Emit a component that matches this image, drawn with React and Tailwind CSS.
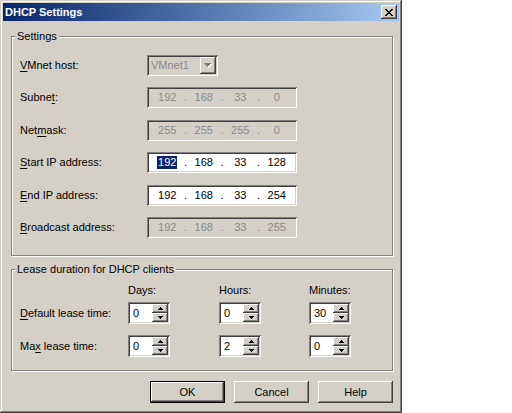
import React, { Fragment } from "react";

const sunken =
  "shadow-[inset_1px_1px_0_#808080,inset_-1px_-1px_0_#ffffff,inset_2px_2px_0_#404040,inset_-2px_-2px_0_#d4d0c8]";
const raised =
  "shadow-[inset_-1px_-1px_0_#404040,inset_1px_1px_0_#ffffff,inset_-2px_-2px_0_#808080,inset_2px_2px_0_#d4d0c8]";

function Lbl({ pre = "", u, post = "" }) {
  return (
    <span className="whitespace-pre">
      {pre}
      <span className="underline underline-offset-[2px]">{u}</span>
      {post}
    </span>
  );
}

function IP({ parts, enabled, selFirst }) {
  return (
    <div
      className={`flex items-center h-[21px] w-[150px] px-[4px] ${sunken} ${
        enabled ? "bg-white text-black" : "bg-[#d4d0c8] text-[#8a8a8a]"
      }`}
    >
      {parts.map((p, i) => (
        <Fragment key={i}>
          {i > 0 && <span className="w-[4px] text-center">.</span>}
          <span className="flex-1 text-center">
            <span
              className={
                i === 0 && selFirst
                  ? "inline-block bg-[#0a246a] text-white leading-[13px] px-[1px]"
                  : "inline-block leading-[13px] px-[1px]"
              }
            >
              {p}
            </span>
          </span>
        </Fragment>
      ))}
    </div>
  );
}

function Arrow({ up, color = "#000000" }) {
  return (
    <svg width="5" height="3" viewBox="0 0 5 3" shapeRendering="crispEdges">
      {up ? (
        <path d="M2 0h1v1h1v1h1v1H0V2h1V1h1z" fill={color} />
      ) : (
        <path d="M0 0h5v1H4v1H3v1H2V2H1V1H0z" fill={color} />
      )}
    </svg>
  );
}

function Spinner({ value }) {
  return (
    <div className={`flex w-[42px] h-[22px] bg-white p-[2px] ${sunken}`}>
      <div className="flex-1 flex items-center pl-[3px] text-black">{value}</div>
      <div className="flex flex-col w-[16px]">
        <div className={`h-[9px] flex items-center justify-center bg-[#d4d0c8] ${raised}`}>
          <Arrow up />
        </div>
        <div className={`h-[9px] flex items-center justify-center bg-[#d4d0c8] ${raised}`}>
          <Arrow />
        </div>
      </div>
    </div>
  );
}

function Row({ label, children, mt }) {
  return (
    <div className={`flex items-center h-[21px] ${mt}`}>
      <div className="w-[127px]">{label}</div>
      {children}
    </div>
  );
}

function Btn({ children, def }) {
  return (
    <div
      className={`w-[75px] h-[22px] flex items-center justify-center bg-[#d4d0c8] ${raised} ${
        def ? "border border-black" : ""
      }`}
    >
      {children}
    </div>
  );
}

export default function App() {
  return (
    <div className="w-[512px] h-[413px] bg-white font-['Liberation_Sans',Arial,sans-serif] text-[11px] text-black leading-[13px]">
      <div className="w-[402px] h-[413px] bg-[#d4d0c8] p-[3px] flex flex-col shadow-[inset_-1px_-1px_0_#404040,inset_1px_1px_0_#d4d0c8,inset_-2px_-2px_0_#808080,inset_2px_2px_0_#ffffff]">
        {/* Title bar */}
        <div className="h-[18px] flex items-center justify-between pl-[2px] pr-[2px] bg-linear-to-r from-[#0a246a] to-[#a6caf0]">
          <span className="font-bold text-white text-[11px]">DHCP Settings</span>
          <div className={`w-[16px] h-[14px] bg-[#d4d0c8] flex items-center justify-center ${raised}`}>
            <svg width="8" height="7" viewBox="0 0 8 7" shapeRendering="crispEdges">
              <path
                d="M0 0h2v1h1v1h2V1h1V0h2v1H7v1H6v1H5v1h1v1h1v1h1v1H6V6H5V5H3v1H2v1H0V6h1V5h1V4h1V3H2V2H1V1H0z"
                fill="#000"
              />
            </svg>
          </div>
        </div>

        <div className="px-[8px]">
          {/* Settings group */}
          <div className="relative mt-[15px] w-[382px] h-[220px] border border-[#808080] shadow-[inset_1px_1px_0_#ffffff,1px_1px_0_#ffffff] pt-[18px] pl-[8px]">
            <span className="absolute left-[3px] top-[-8px] px-[2px] bg-[#d4d0c8] leading-[14px]">
              Settings
            </span>
            <Row label={<Lbl u="V" post="Mnet host:" />} mt="">
              <div className={`flex items-center w-[71px] h-[21px] bg-[#d4d0c8] p-[2px] ${sunken}`}>
                <div className="flex-1 pl-[2px] text-[#8a8a8a]">VMnet1</div>
                <div className={`w-[16px] h-[17px] flex items-center justify-center bg-[#d4d0c8] ${raised}`}>
                  <svg width="8" height="5" viewBox="0 0 8 5" shapeRendering="crispEdges">
                    <path d="M1 1h7v1H7v1H6v1H5v1H4V4H3V3H2V2H1z" fill="#ffffff" />
                    <path d="M0 0h7v1H6v1H5v1H4v1H3V3H2V2H1V1H0z" fill="#808080" />
                  </svg>
                </div>
              </div>
            </Row>
            <Row label={<Lbl pre="Subne" u="t" post=":" />} mt="mt-[11px]">
              <IP parts={["192", "168", "33", "0"]} />
            </Row>
            <Row label={<Lbl pre="Net" u="m" post="ask:" />} mt="mt-[12px]">
              <IP parts={["255", "255", "255", "0"]} />
            </Row>
            <Row label={<Lbl u="S" post="tart IP address:" />} mt="mt-[11px]">
              <IP parts={["192", "168", "33", "128"]} enabled selFirst />
            </Row>
            <Row label={<Lbl u="E" post="nd IP address:" />} mt="mt-[12px]">
              <IP parts={["192", "168", "33", "254"]} enabled />
            </Row>
            <Row label={<Lbl u="B" post="roadcast address:" />} mt="mt-[11px]">
              <IP parts={["192", "168", "33", "255"]} />
            </Row>
          </div>

          {/* Lease group */}
          <div className="relative mt-[13px] w-[382px] h-[102px] border border-[#808080] shadow-[inset_1px_1px_0_#ffffff,1px_1px_0_#ffffff] pt-[13px] pl-[8px]">
            <span className="absolute left-[3px] top-[-8px] px-[2px] bg-[#d4d0c8] leading-[14px]">
              Lease duration for DHCP clients
            </span>
            <div className="flex h-[14px] items-center">
              <div className="w-[108px]" />
              <div className="w-[91px]">Days:</div>
              <div className="w-[90px]">Hours:</div>
              <div>Minutes:</div>
            </div>
            <div className="flex items-center h-[22px] mt-[5px]">
              <div className="w-[108px]">
                <Lbl u="D" post="efault lease time:" />
              </div>
              <div className="w-[91px]">
                <Spinner value="0" />
              </div>
              <div className="w-[90px]">
                <Spinner value="0" />
              </div>
              <Spinner value="30" />
            </div>
            <div className="flex items-center h-[22px] mt-[11px]">
              <div className="w-[108px]">
                <Lbl pre="Ma" u="x" post=" lease time:" />
              </div>
              <div className="w-[91px]">
                <Spinner value="0" />
              </div>
              <div className="w-[90px]">
                <Spinner value="2" />
              </div>
              <Spinner value="0" />
            </div>
          </div>

          {/* Buttons */}
          <div className="w-[382px] mt-[10px] flex justify-end gap-[9px]">
            <Btn def>OK</Btn>
            <Btn>Cancel</Btn>
            <Btn>Help</Btn>
          </div>
        </div>
      </div>
    </div>
  );
}
